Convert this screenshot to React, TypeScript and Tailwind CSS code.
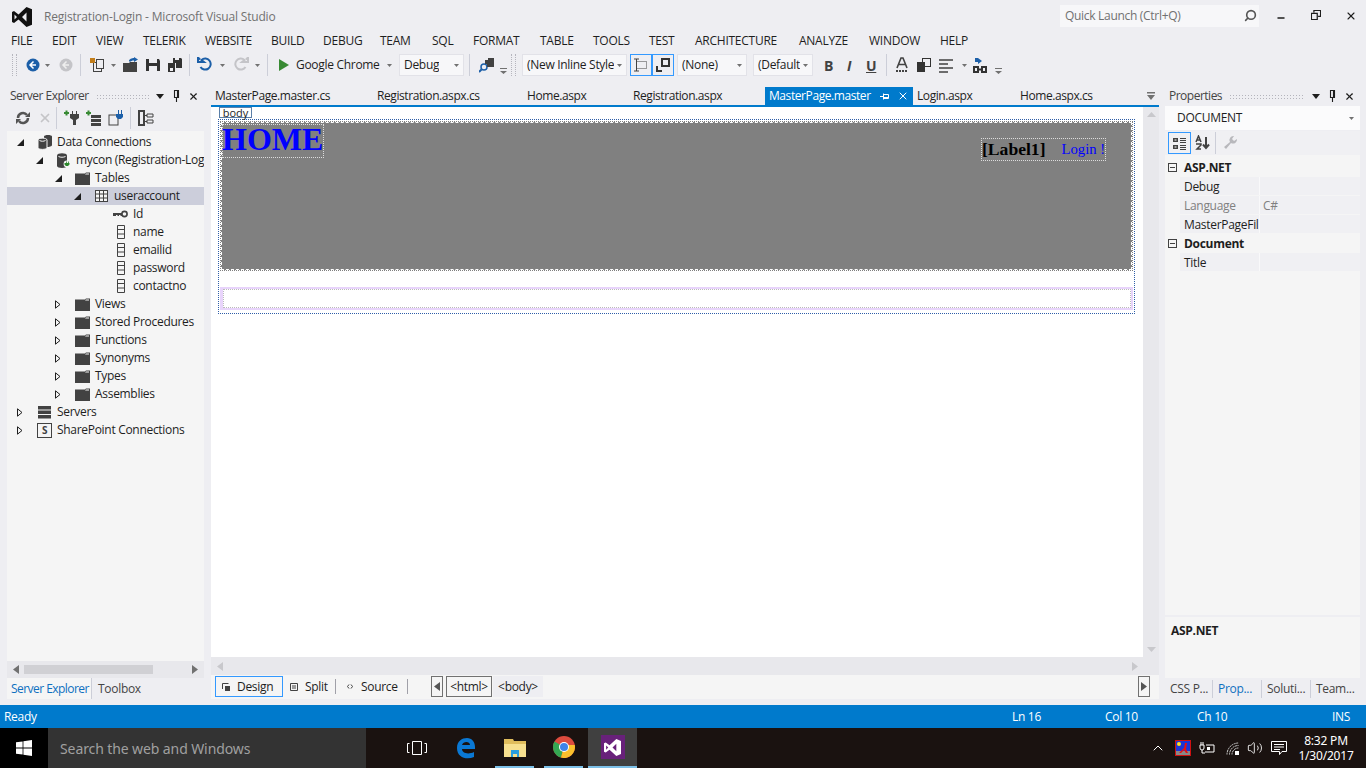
import { ReactNode } from 'react';
import { X, ChevronUp, Volume2, Search, Minus } from 'lucide-react';

const menus = [
  ['FILE', 'w-[41px]'], ['EDIT', 'w-[44px]'], ['VIEW', 'w-[47px]'], ['TELERIK', 'w-[62px]'], ['WEBSITE', 'w-[66px]'],
  ['BUILD', 'w-[52px]'], ['DEBUG', 'w-[57px]'], ['TEAM', 'w-[52px]'], ['SQL', 'w-[41px]'], ['FORMAT', 'w-[67px]'],
  ['TABLE', 'w-[53px]'], ['TOOLS', 'w-[56px]'], ['TEST', 'w-[46px]'], ['ARCHITECTURE', 'w-[104px]'], ['ANALYZE', 'w-[70px]'],
  ['WINDOW', 'w-[71px]'], ['HELP', 'w-[40px]'],
];

// small toolbar glyphs
const Caret = () => (
  <svg width="5" height="3" viewBox="0 0 5 3" className="block shrink-0"><path d="M0 0h5L2.500 3z" fill="#717171" /></svg>
);

const Grip = () => <div className="h-[22px] w-[5px] shrink-0 border-x border-dotted border-[#b5b5bd]" />;
const Sep = ({ cls }: { cls: string }) => <div className={`h-[22px] w-px shrink-0 bg-[#ccced8] ${cls}`} />;

const Ico = ({ w = 16, children }: { w?: number; children: ReactNode }) => (
  <svg width={w} height="16" viewBox={`0 0 ${w} 16`} className="block shrink-0">{children}</svg>
);

const Overflow = () => (
  <svg width="7" height="6" viewBox="0 0 7 6" className="mt-[12px] block shrink-0"><path d="M0 0h7v1H0zM0 3h7L3.500 6z" fill="#717171" /></svg>
);

const Combo = ({ label, cls }: { label: string; cls: string }) => (
  <div className={`flex h-[22px] shrink-0 items-center justify-between border border-[#e2e2e8] bg-[#f7f7f9] px-[4px] ${cls}`}>
    <span className="overflow-hidden whitespace-nowrap">{label}</span>
    <Caret />
  </div>
);

const VsLogo = ({ size, color }: { size: number; color: string }) => (
  <svg width={size} height={size} viewBox="0 0 20 20" className="shrink-0">
    <path d="M14.500 0 20 2.300v15.400L14.500 20 6.500 12.600 2 16l-2-1V5l2-1 4.500 3.400zM14.500 5.500 10 10l4.500 4.500zM2.500 7.500v5L5 10z" fill={color} fillRule="evenodd" />
  </svg>
);

const DockHeader = ({ title }: { title: string }) => (
  <div className="flex h-[18px] shrink-0 items-center pl-[3px] pr-[5px] tracking-[-0.5px] text-[#444]">
    <span className="whitespace-nowrap">{title}</span>
    <div className="mx-[7px] h-[5px] flex-1 bg-[radial-gradient(#b4b4bc_0.7px,transparent_0.8px)] bg-[length:3px_3px]" />
    <svg width="8" height="5" viewBox="0 0 8 5" className="mr-[9px]"><path d="M0 0h8L4 5z" fill="#1e1e1e" /></svg>
    <svg width="7" height="12" viewBox="0 0 7 12" className="mr-[8px]"><path d="M1 7.500h5M1.500 .5h4v7h-4zM4.500 1v6M3.500 8v4" fill="none" stroke="#1e1e1e" strokeWidth="1.100" /></svg>
    <X size={11} strokeWidth={2.500} color="#1e1e1e" />
  </div>
);

const Folder = () => (
  <Ico w={15}>
    <path d="M0 3.500h10l1-1h4V15H0z" fill="#424242" />
    <path d="M1 4.500h9l1-1h3v1H1z" fill="#f5f5f5" />
  </Ico>
);

const Column = () => (
  <Ico w={13}>
    <path d="M4.500 1.500h7v13h-7zM4.500 5.500h7M4.500 10h7" fill="none" stroke="#424242" />
  </Ico>
);

const Key = () => (
  <Ico w={15}>
    <path d="M0 7h9v3H7.500V9H6v1H4.500V9H3v1H0z" fill="#424242" />
    <circle cx="11.500" cy="8" r="2.600" fill="none" stroke="#424242" strokeWidth="1.600" />
  </Ico>
);

const Open = () => (
  <svg width="7" height="7" viewBox="0 0 7 7"><path d="M7 0v7H0z" fill="#1e1e1e" /></svg>
);
const Closed = () => (
  <svg width="6" height="9" viewBox="0 0 6 9"><path d="M.5.800 5 4.500.5 8.200z" fill="none" stroke="#1e1e1e" /></svg>
);

const Cylinders = () => (
  <Ico>
    <path d="M7 2.500C7 .5 15 .5 15 2.500V11c0 1.500-3 2-5 2V5H7z" fill="#424242" />
    <path d="M1 6c0-2.500 9-2.500 9 0v7.500c0 2.500-9 2.500-9 0z" fill="#424242" stroke="#f5f5f5" strokeWidth="1" />
    <path d="M2.500 6.500c2 1 4 1 6 0" fill="none" stroke="#f5f5f5" />
  </Ico>
);

const DbConn = () => (
  <Ico>
    <path d="M1 3.500c0-3 10-3 10 0V14c0 2.500-10 2.500-10 0z" fill="#424242" />
    <path d="M2.500 4.500c2 1 5 1 7 0" fill="none" stroke="#f5f5f5" />
    <circle cx="11" cy="12" r="3.400" fill="#f5f5f5" />
    <path d="M8.500 11h5v1.500l-1.500 1.500h-2L8.500 12.500zM10 9.500h.8V11H10zM12 9.500h.8V11H12z" fill="#2d8a2d" />
  </Ico>
);

const Row = ({ indent, arrow, icon, label, selected }: { indent: string; arrow?: ReactNode; icon: ReactNode; label: string; selected?: boolean }) => (
  <div className={`flex h-[18px] items-center whitespace-nowrap ${indent} ${selected ? 'bg-[#cccedb]' : ''}`}>
    <div className="flex w-[19px] shrink-0 items-center">{arrow}</div>
    <div className="flex w-[19px] shrink-0 justify-start pl-[1px]">{icon}</div>
    <span className="ml-[2px] text-[#1e1e1e]">{label}</span>
  </div>
);

const DocTab = ({ label, cls }: { label: string; cls: string }) => (
  <div className={`h-[18px] shrink-0 whitespace-nowrap pl-[4px] leading-[18px] tracking-[-0.42px] text-[#1e1e1e] ${cls}`}>{label}</div>
);

const PropRow = ({ name, value, muted }: { name: string; value?: string; muted?: boolean }) => (
  <div className={`ml-[12px] mb-px flex h-[18px] bg-[#f0f0f3] leading-[20px] ${muted ? 'text-[#808080]' : 'text-[#1e1e1e]'}`}>
    <div className="h-[18px] w-[80px] shrink-0 whitespace-nowrap border-r border-[#f9f9fa] pl-[4px]">{name}</div>
    <div className="h-[18px] pl-[3px]">{value}</div>
  </div>
);

const PropGroup = ({ name }: { name: string }) => (
  <div className="flex h-[19px] items-center">
    <div className="flex h-[9px] w-[9px] items-center justify-center border border-[#424242]">
      <div className="h-px w-[5px] bg-[#424242]" />
    </div>
    <span className="ml-[7px] font-bold text-[#1e1e1e]">{name}</span>
  </div>
);

export default function App() {
  return (
    <div className="flex h-[768px] w-[1366px] flex-col overflow-hidden bg-[#eeeef2] text-[12px] font-['Open_Sans','Noto_Sans',sans-serif] tracking-[-0.3px] text-[#1e1e1e]">
      {/* title bar */}
      <div className="flex h-[32px] shrink-0 items-center pl-[12px] pt-[2px]">
        <VsLogo size={20} color="#111" />
        <span className="ml-[12px] tracking-[-0.18px] text-[#717171]">Registration-Login - Microsoft Visual Studio</span>
        <div className="ml-auto mb-[3px] flex h-[22px] w-[199px] items-center justify-between bg-[#f7f7f9] pl-[5px] pr-[2px] text-[#717171]">
          <span>Quick Launch (Ctrl+Q)</span>
          <Search size={13} strokeWidth={3} color="#555" className="-scale-x-100" />
        </div>
        <div className="mb-[3px] flex w-[107px] items-center pl-[17px]">
          <Minus size={10} strokeWidth={4} color="#1e1e1e" className="mt-[4px]" />
          <svg width="10" height="10" viewBox="0 0 12 12" className="ml-[25px] mb-[1px]"><path d="M3.500 3V.5h8v7H8.500M.5 4h7v7.500h-7z" fill="none" stroke="#1e1e1e" strokeWidth="1.500" /></svg>
          <X size={12} strokeWidth={2.200} color="#1e1e1e" className="ml-[24px]" />
        </div>
      </div>

      {/* menu */}
      <div className="flex h-[18px] shrink-0 items-center pl-[11px] tracking-[-0.25px]">
        {menus.map(([m, w]) => (
          <div key={m} className={`shrink-0 whitespace-nowrap ${w}`}>{m}</div>
        ))}
      </div>

      {/* toolbar */}
      <div className="mt-[2px] flex h-[26px] shrink-0 items-center pl-[12px]">
        <Grip />
        <div className="ml-[8px]"><Ico><circle cx="8" cy="8" r="6.500" fill="#1c5fa8" /><path d="M8.500 4.500 5 8l3.500 3.500M5 8h6" stroke="#fff" strokeWidth="1.500" fill="none" /></Ico></div>
        <div className="ml-[4px] mr-[8px]"><Caret /></div>
        <Ico><circle cx="8" cy="8" r="6.500" fill="#c4c4c8" /><path d="M8.500 4.500 5 8l3.500 3.500M5 8h6" stroke="#eee" strokeWidth="1.500" fill="none" /></Ico>
        <Sep cls="ml-[6px] mr-[4px]" />
        <div className="ml-[4px]"><Ico><rect x="4.500" y="5.500" width="8" height="9" fill="none" stroke="#424242" /><rect x="7.500" y="2.500" width="7" height="9" fill="#eeeef2" stroke="#424242" /><rect x="1" y="1" width="5" height="5" fill="#c27d1a" /></Ico></div>
        <div className="ml-[6px] mr-[7px]"><Caret /></div>
        <Ico><path d="M0 6h6l1-1h7v10H0z" fill="#424242" /><path d="M6 4C6 2 9 1 11 1V0l4 2.500L11 5V3.500C9 3.500 8 4 7 5" fill="#1c5fa8" /></Ico>
        <div className="ml-[6px]"><Ico><path d="M1 2h3v4h8V2h2l1 2v10H1z" fill="#333" /><rect x="4" y="9" width="8" height="5" fill="#eeeef2" /></Ico></div>
        <div className="ml-[6px]"><Ico><path d="M6 1h2v2h4V1h2l1 1v9H9V6H6z" fill="#333" /><path d="M1 6h7v9H1z" fill="#333" /><rect x="3" y="11" width="3" height="3" fill="#eeeef2" /></Ico></div>
        <Sep cls="ml-[6px] mr-[4px]" />
        <div className="ml-[3px]"><Ico><path d="M3.500 10a5.500 5.500 0 1 0 1-7L7 5H1V.5l2 2" fill="none" stroke="#1c5fa8" strokeWidth="2" /></Ico></div>
        <div className="ml-[7px]"><Caret /></div>
        <div className="ml-[8px]"><Ico><path d="M12.500 10a5.500 5.500 0 1 1-1-7L9 5h6V.5l-2 2" fill="none" stroke="#c4c4c8" strokeWidth="2" /></Ico></div>
        <div className="ml-[6px]"><Caret /></div>
        <Sep cls="ml-[7px] mr-[4px]" />
        <div className="ml-[7px]"><svg width="10" height="12" viewBox="0 0 10 12" className="block"><path d="M0 0l10 6-10 6z" fill="#388a34" /></svg></div>
        <span className="ml-[7px] w-[84px] whitespace-nowrap">Google Chrome</span>
        <div className="ml-[7px]"><Caret /></div>
        <div className="ml-[7px]"><Combo label="Debug" cls="w-[65px]" /></div>
        <Sep cls="ml-[5px] mr-[4px]" />
        <div className="ml-[5px]"><Ico><circle cx="5" cy="10" r="3" fill="none" stroke="#1c5fa8" strokeWidth="1.500" /><path d="M2.500 12.500 0 15" stroke="#1c5fa8" strokeWidth="2" /><path d="M6 3h9v7H8V7H6z" fill="#424242" /><path d="M9 1h6v2H9z" fill="#424242" /></Ico></div>
        <div className="ml-[5px]"><Overflow /></div>
        <div className="ml-[4px]"><Grip /></div>
        <div className="ml-[6px]"><Combo label="(New Inline Style" cls="w-[105px]" /></div>
        <div className="ml-[3px] flex h-[22px] w-[22px] shrink-0 items-center justify-center border border-[#3399ff]">
          <svg width="16" height="14" viewBox="0 0 16 14"><rect x="3.500" y="3.500" width="10" height="7" fill="none" stroke="#424242" strokeDasharray="1 1" /><path d="M1 1h5M1 13h5M3.500 1v12" stroke="#424242" /></svg>
        </div>
        <div className="flex h-[22px] w-[22px] shrink-0 items-center justify-center border border-[#3399ff]">
          <svg width="16" height="16" viewBox="0 0 16 16"><path d="M2 15V9M2 14h5" fill="none" stroke="#333" strokeWidth="2" /><path d="M7 2h7v7H7z" fill="none" stroke="#333" strokeWidth="2" /></svg>
        </div>
        <div className="ml-[3px]"><Combo label="(None)" cls="w-[70px]" /></div>
        <div className="ml-[6px]"><Combo label="(Default" cls="w-[60px]" /></div>
        <span className="ml-[11px] w-[14px] text-[14px] font-bold text-[#424242]">B</span>
        <span className="ml-[9px] w-[8px] text-[14px] font-bold italic text-[#424242]">I</span>
        <span className="ml-[11px] w-[15px] text-[14px] font-bold text-[#424242] underline">U</span>
        <Sep cls="ml-[5px] mr-[4px]" />
        <div className="ml-[3px]"><Ico><path d="M3 11 7 1h2l4 10M5 7.500h6" fill="none" stroke="#424242" strokeWidth="1.600" /><path d="M2 14h12" stroke="#424242" strokeWidth="2" strokeDasharray="2 1" /></Ico></div>
        <div className="ml-[6px]"><Ico><rect x="6.500" y="1.500" width="8" height="8" fill="none" stroke="#333" /><rect x="1" y="5" width="8" height="10" fill="#333" /></Ico></div>
        <div className="ml-[6px]"><Ico><path d="M1 3h14M1 7h9M1 11h14M1 15h9" stroke="#424242" strokeWidth="1.600" /></Ico></div>
        <div className="ml-[8px]"><Caret /></div>
        <div className="ml-[5px]"><Ico><path d="M3 1h3l4 3-4 3V5H3z" fill="#1c5fa8" /><path d="M2 10h4v5H2zM10 10h4v5h-4z" fill="none" stroke="#333" strokeWidth="2" /><path d="M5 12.500h6" stroke="#333" strokeWidth="2" /></Ico></div>
        <div className="ml-[7px]"><Overflow /></div>
      </div>

      {/* docked panels */}
      <div className="mt-[9px] flex h-[618px] shrink-0">
        {/* server explorer */}
        <div className="ml-[7px] flex w-[197px] shrink-0 flex-col">
          <DockHeader title="Server Explorer" />
          <div className="flex h-[26px] shrink-0 items-center pl-[8px]">
            <Ico><path d="M13 8a5 5 0 0 1-9 3M3 8a5 5 0 0 1 9-3" fill="none" stroke="#555" strokeWidth="2.500" /><path d="M10 7h5V2zM6 9H1v5z" fill="#555" /></Ico>
            <div className="ml-[7px]"><X size={14} strokeWidth={3} color="#c4c4c8" /></div>
            <Sep cls="ml-[4px] mr-[4px]" />
            <div className="ml-[3px]"><Ico><path d="M0 3h5M2.500.5v5" stroke="#388a34" strokeWidth="2" /><path d="M6 4h9v4l-3 2v5h-3v-5L6 8zM8 1h1v3H8zM12 1h1v3h-1z" fill="#424242" /></Ico></div>
            <div className="ml-[6px]"><Ico><path d="M0 3h5M2.500.5v5" stroke="#388a34" strokeWidth="2" /><path d="M5 5h10v3H5zM5 9h10v3H5zM5 13h10v3H5z" fill="#424242" /></Ico></div>
            <div className="ml-[6px]"><Ico><rect x="1" y="5" width="9" height="10" fill="none" stroke="#424242" /><path d="M8 4h7v3l-2 2h-3L8 7zM10 0h1v4h-1zM13 0h1v4h-1z" fill="#1c5fa8" /></Ico></div>
            <Sep cls="ml-[6px] mr-[4px]" />
            <div className="ml-[3px]"><Ico><path d="M1 1h5v14H1z" fill="none" stroke="#424242" strokeWidth="2" /><path d="M9 4h6v3H9zM9 10h6v3H9zM6 5.500h3M6 11.500h3" fill="none" stroke="#424242" /></Ico></div>
          </div>
          <div className="flex-1 overflow-hidden bg-[#f5f5f5] pt-[2px]">
            <Row indent="pl-[10px]" arrow={<Open />} icon={<Cylinders />} label="Data Connections" />
            <Row indent="pl-[29px]" arrow={<Open />} icon={<DbConn />} label="mycon (Registration-Log" />
            <Row indent="pl-[48px]" arrow={<Open />} icon={<Folder />} label="Tables" />
            <Row indent="pl-[67px]" selected arrow={<Open />} icon={<Ico><rect x="1.500" y="2.500" width="12" height="11" fill="#f5f5f5" stroke="#424242" /><path d="M1.500 6h12M1.500 10h12M5.500 2.500v11M9.500 2.500v11" stroke="#424242" /></Ico>} label="useraccount" />
            {['Id', 'name', 'emailid', 'password', 'contactno'].map(c => (
              <Row key={c} indent="pl-[86px]" icon={c === 'Id' ? <Key /> : <Column />} label={c} />
            ))}
            {['Views', 'Stored Procedures', 'Functions', 'Synonyms', 'Types', 'Assemblies'].map(f => (
              <Row key={f} indent="pl-[48px]" arrow={<Closed />} icon={<Folder />} label={f} />
            ))}
            <Row indent="pl-[10px]" arrow={<Closed />} icon={<Ico><path d="M1 2h13v3.500H1zM1 6.500h13V10H1zM1 11h13v3.500H1z" fill="#424242" /></Ico>} label="Servers" />
            <Row indent="pl-[10px]" arrow={<Closed />} icon={<div className="flex h-[15px] w-[15px] items-center justify-center border border-[#424242] text-[10px] font-bold leading-none text-[#424242]">S</div>} label="SharePoint Connections" />
          </div>
          <div className="flex h-[17px] shrink-0 items-center bg-[#e8e8ec] px-[6px]">
            <svg width="6" height="9" viewBox="0 0 6 9"><path d="M6 0v9L0 4.500z" fill="#717171" /></svg>
            <div className="ml-[5px] h-[9px] w-[129px] bg-[#d0d0d4]" />
            <svg width="6" height="9" viewBox="0 0 6 9" className="ml-auto"><path d="M0 0v9l6-4.500z" fill="#717171" /></svg>
          </div>
          <div className="flex h-[21px] shrink-0 items-center text-[#444]">
            <div className="flex h-[21px] w-[85px] items-center whitespace-nowrap border-r border-[#ccced8] bg-[#f5f5f5] pl-[4px] tracking-[-0.55px] text-[#0e70c0]">Server Explorer</div>
            <div className="pl-[6px]">Toolbox</div>
          </div>
          <div className="h-[6px] shrink-0" />
        </div>

        {/* editor */}
        <div className="ml-[7px] flex w-[948px] shrink-0 flex-col">
          <div className="flex h-[18px] shrink-0 items-center">
            <DocTab label="MasterPage.master.cs" cls="w-[162px]" />
            <DocTab label="Registration.aspx.cs" cls="w-[150px]" />
            <DocTab label="Home.aspx" cls="w-[106px]" />
            <DocTab label="Registration.aspx" cls="w-[136px]" />
            <div className="flex h-[18px] w-[148px] shrink-0 items-center bg-[#007acc] pl-[4px] tracking-[-0.42px] text-white">
              <span className="w-[107px] whitespace-nowrap">MasterPage.master</span>
              <svg width="9" height="7" viewBox="0 0 9 7" className="ml-[4px]"><path d="M0 3.500h3M3.500 .5v6M3.500 1.500h5v4h-5M3.500 4.500h5" fill="none" stroke="#fff" /></svg>
              <X size={12} strokeWidth={2} color="#fff" className="ml-[8px]" />
            </div>
            <DocTab label="Login.aspx" cls="w-[103px]" />
            <DocTab label="Home.aspx.cs" cls="w-[130px]" />
            <svg width="8" height="8" viewBox="0 0 8 8" className="ml-[1px]"><path d="M0 0h8v1.500H0zM0 3h8L4 8z" fill="#717171" /></svg>
          </div>
          <div className="h-[2px] shrink-0 bg-[#007acc]" />
          <div className="flex min-h-0 flex-1">
            <div className="flex-1 bg-white pl-[7px] pr-[7px]">
              <div className="ml-[1px] h-[11px] w-[33px] border border-[#5b7fa8] text-center text-[11px] leading-[9px] tracking-normal">body</div>
              <div className="mt-[1px] mr-[1px] h-[195px] border border-dotted border-[#2f5ea8] p-[1px]">
                <div className="border border-dotted border-[#808080]">
                  <div className="h-[148px] border border-dashed border-white bg-[#808080]">
                    <div className="flex items-start justify-between">
                      <div className="mt-px h-[34px] w-[102px] border border-dotted border-[#ddd] font-['Liberation_Serif',serif] text-[32px] font-bold leading-[29px] tracking-normal text-[#0000ff]">
                        <span className="-ml-px">HOME</span>
                      </div>
                      <div className="mr-[25px] mt-[15px] flex h-[23px] w-[125px] items-center whitespace-nowrap border border-dotted border-[#ddd] font-['Liberation_Serif',serif] tracking-normal">
                        <span className="text-[17.6px] font-bold leading-none text-black">[Label1]</span>
                        <span className="ml-[16px] text-[14.67px] leading-none text-[#0000ff]">Login !</span>
                      </div>
                    </div>
                  </div>
                </div>
                <div className="mt-[16px] h-[23px] border-2 border-l-[3px] border-[#e8d4fb]">
                  <div className="h-[19px] border border-dotted border-[#bbb]" />
                </div>
              </div>
            </div>
            <div className="flex w-[16px] shrink-0 flex-col items-center justify-between bg-[#e8e8ec] py-[5px]">
              <svg width="9" height="5" viewBox="0 0 9 5"><path d="M0 5h9L4.500 0z" fill="#c8c8cc" /></svg>
              <svg width="9" height="5" viewBox="0 0 9 5"><path d="M0 0h9L4.500 5z" fill="#c8c8cc" /></svg>
            </div>
          </div>
          <div className="flex h-[18px] shrink-0 items-center justify-between bg-[#e8e8ec] pl-[6px] pr-[21px]">
            <svg width="6" height="9" viewBox="0 0 6 9"><path d="M6 0v9L0 4.500z" fill="#c8c8cc" /></svg>
            <svg width="6" height="9" viewBox="0 0 6 9"><path d="M0 0v9l6-4.500z" fill="#c8c8cc" /></svg>
          </div>
          <div className="flex h-[24px] shrink-0 items-center bg-[#f5f5f5] pb-[1px] pl-[4px]">
            <div className="flex h-[21px] w-[68px] shrink-0 items-center border border-[#3399ff] pl-[6px]">
              <svg width="8" height="8" viewBox="0 0 8 8"><path d="M.5 6V.5h6" fill="none" stroke="#424242" /><rect x="3" y="3" width="5" height="5" fill="#424242" /></svg>
              <span className="ml-[7px]">Design</span>
            </div>
            <svg width="8" height="8" viewBox="0 0 8 8" className="ml-[7px] shrink-0"><path d="M.5.5h7v7h-7zM2 3h4M2 5h4" fill="none" stroke="#424242" /></svg>
            <span className="ml-[7px] w-[30px] shrink-0">Split</span>
            <div className="h-[15px] w-px shrink-0 bg-[#a0a0a8]" />
            <svg width="6" height="5" viewBox="0 0 6 5" className="ml-[11px] shrink-0"><path d="M2 .5 .5 2.500 2 4.500M4 .5l1.500 2L4 4.500" fill="none" stroke="#424242" /></svg>
            <span className="ml-[8px] w-[36px] shrink-0">Source</span>
            <div className="ml-[10px] h-[15px] w-px shrink-0 bg-[#a0a0a8]" />
            <div className="ml-[23px] flex h-[21px] w-[12px] shrink-0 items-center justify-center border border-[#717171]">
              <svg width="6" height="9" viewBox="0 0 6 9"><path d="M6 0v9L0 4.500z" fill="#555" /></svg>
            </div>
            <div className="ml-[3px] flex h-[21px] w-[46px] shrink-0 items-center justify-center border border-[#717171]">&lt;html&gt;</div>
            <div className="ml-px flex h-[21px] w-[50px] shrink-0 items-center justify-center bg-[#eeeef2]">&lt;body&gt;</div>
            <div className="ml-auto mr-[9px] flex h-[21px] w-[12px] items-center justify-center border border-[#717171]">
              <svg width="6" height="9" viewBox="0 0 6 9"><path d="M0 0v9l6-4.500z" fill="#555" /></svg>
            </div>
          </div>
          <div className="h-[6px] shrink-0" />
        </div>

        {/* properties */}
        <div className="ml-[6px] flex w-[195px] shrink-0 flex-col">
          <div className="pl-[1px]"><DockHeader title="Properties" /></div>
          <div className="mt-px flex h-[24px] shrink-0 items-center justify-between bg-[#fbfbfc] pl-[12px] pr-[6px]">
            <span>DOCUMENT</span>
            <Caret />
          </div>
          <div className="mt-[1px] flex h-[24px] shrink-0 items-center bg-[#f0f0f3] pl-[3px]">
            <div className="flex h-[22px] w-[23px] items-center justify-center border border-[#3399ff]">
              <svg width="15" height="15" viewBox="0 0 15 15"><path d="M1 2h5v4H1zM1 9h5v4H1z" fill="#424242" /><path d="M2.500 4h2M2.500 11h2" stroke="#fff" /><path d="M8 2.500h6M8 4.500h6M8 6.500h6M8 9.500h6M8 11.500h6M8 13.500h6" fill="none" stroke="#424242" /></svg>
            </div>
            <div className="ml-[4px]"><Ico><path d="M1 7 3.500 1 6 7M2 5h3M1 9h5v1l-4 4h4" fill="none" stroke="#424242" strokeWidth="1.500" /><path d="M11 2v11M8 9.500l3 3.500 3-3.500" fill="none" stroke="#424242" strokeWidth="2" /></Ico></div>
            <Sep cls="ml-[4px] mr-[4px]" />
            <div className="ml-[3px]"><Ico><path d="M14 4a4 4 0 0 1-6 4l-5 6-2-2 6-5a4 4 0 0 1 4-6L9 4l2 2z" fill="#b8b8bc" /></Ico></div>
          </div>
          <div className="flex-1 bg-[#f5f5f5] pl-[3px] pt-[3px]">
            <PropGroup name="ASP.NET" />
            <PropRow name="Debug" />
            <PropRow name="Language" value="C#" muted />
            <PropRow name="MasterPageFil" />
            <PropGroup name="Document" />
            <PropRow name="Title" />
          </div>
          <div className="mt-[2px] h-[61px] shrink-0 bg-[#f5f5f5] pl-[6px] pt-[5px] font-bold">ASP.NET</div>
          <div className="flex h-[21px] shrink-0 items-center text-[#444]">
            <div className="w-[48px] border-r border-[#ccced8] pl-[5px]">CSS P...</div>
            <div className="w-[49px] border-r border-[#ccced8] pl-[5px] text-[#0e70c0]">Prop...</div>
            <div className="w-[49px] border-r border-[#ccced8] pl-[5px]">Soluti...</div>
            <div className="pl-[5px]">Team...</div>
          </div>
          <div className="h-[6px] shrink-0" />
        </div>
      </div>

      {/* status bar */}
      <div className="flex h-[23px] shrink-0 items-center bg-[#007acc] pl-[4px] text-white">
        <span className="w-[1008px]">Ready</span>
        <span className="w-[93px]">Ln 16</span>
        <span className="w-[92px]">Col 10</span>
        <span className="w-[135px]">Ch 10</span>
        <span>INS</span>
      </div>

      {/* taskbar */}
      <div className="flex h-[40px] shrink-0 items-center bg-[#1a1210] font-['Noto_Sans',sans-serif] tracking-normal">
        <div className="flex h-full w-[48px] items-center justify-center bg-black">
          <svg width="16" height="16" viewBox="0 0 16 16"><path d="M0 2.300 6.600 1.400v6.200H0zM7.400 1.300 16 0v7.600H7.400zM0 8.400h6.600v6.200L0 13.700zM7.400 8.400H16V16l-8.600-1.300z" fill="#fff" /></svg>
        </div>
        <div className="flex h-full w-[318px] items-center bg-[#333] pl-[12px] text-[14px] tracking-[-0.1px] text-[#a0a0a0]">Search the web and Windows</div>
        <div className="ml-[26px] flex h-full items-center">
          <div className="flex h-[40px] w-[49px] items-center justify-center">
            <svg width="20" height="14" viewBox="0 0 20 14"><path d="M5.500 .5h9v13h-9z" fill="none" stroke="#fff" /><path d="M2.500 2.500H.5v9h2M17.500 2.500h2v9h-2" fill="none" stroke="#fff" /></svg>
          </div>
          <div className="flex h-[40px] w-[49px] items-center justify-center">
            <svg width="20" height="22" viewBox="0 0 20 22"><path d="M1 11C1 4 6 1 11 1c5 0 8 4 8 9v2H6c0 4 6 6 12 3v5c-7 3-17 1-17-9zM6 8h8c0-4-7-4-8 0z" fill="#0a78d4" fillRule="evenodd" /></svg>
          </div>
          <div className="flex h-[40px] w-[49px] px-[5px]">
            <div className="flex h-[40px] w-[39px] items-center justify-center border-b-2 border-[#7cc0e8]">
              <svg width="22" height="20" viewBox="0 0 22 20"><path d="M0 2h9l1 2h12v16H0z" fill="#e0bd5c" /><path d="M0 7h22v13H0z" fill="#f7e08f" /><path d="M7 13h8v7h-2v-3H9v3H7z" fill="#2a9fe0" /></svg>
            </div>
          </div>
          <div className="flex h-[40px] w-[49px] px-[5px]">
            <div className="flex h-[40px] w-[39px] items-center justify-center border-b-2 border-[#7cc0e8]">
              <svg width="22" height="22" viewBox="0 0 22 22">
                <circle cx="11" cy="11" r="11" fill="#dd4b3e" />
                <path d="M11 11 1.500 5.500A11 11 0 0 0 8 21.600z" fill="#34a853" />
                <path d="M11 11 8 21.600A11 11 0 0 0 21.800 9H11z" fill="#fbc02d" />
                <circle cx="11" cy="11" r="5" fill="#fff" />
                <circle cx="11" cy="11" r="4" fill="#3f83e8" />
              </svg>
            </div>
          </div>
          <div className="flex h-[40px] w-[49px] items-center justify-center border-b-2 border-[#7cc0e8] bg-[#404040]">
            <div className="flex h-[24px] w-[24px] items-center justify-center bg-[#68217a]"><VsLogo size={17} color="#fff" /></div>
          </div>
        </div>
        <div className="ml-auto flex items-center text-white">
          <ChevronUp size={16} strokeWidth={1.500} color="#fff" />
          <div className="relative ml-[9px] h-[16px] w-[16px] border border-[#d01010] bg-[#1c34d8]">
            <svg width="14" height="14" viewBox="0 0 14 14" className="block"><path d="M0 10h14v4H0z" fill="#888" /><circle cx="3" cy="3" r="2" fill="#ffe020" /><path d="M3 12 8 7l1-5 2 0-1 6 2 4-2 0-2-3-3 3z" fill="#e81010" /></svg>
          </div>
          <svg width="16" height="12" viewBox="0 0 16 12" className="ml-[8px]"><path d="M5 3v3a2 2 0 0 1-4 0V3zM2 0v3M4 0v3M3 8v3h3" fill="none" stroke="#fff" /><path d="M7 3h8v7H6" fill="none" stroke="#fff" /><path d="M8 5h3v3H8z" fill="#fff" /></svg>
          <svg width="13" height="13" viewBox="0 0 13 13" className="ml-[11px]"><path d="M1 12.500A11.500 11.500 0 0 1 12.500 1M3.500 12.500a9 9 0 0 1 9-9M6 12.500a6.500 6.500 0 0 1 6.500-6.500" fill="none" stroke="#ccc" strokeDasharray="2 .6" /><path d="M9 9h4v4H9z" fill="#fff" /></svg>
          <Volume2 size={16} strokeWidth={1.300} color="#fff" className="ml-[8px]" />
          <svg width="16" height="16" viewBox="0 0 16 16" className="ml-[8px]"><path d="M.5 1.500h15v10H11l-2.500 3v-3h-8zM3 4.500h10M3 7h10M3 9.500h6" fill="none" stroke="#fff" /></svg>
          <div className="ml-[11px] mr-[12px] w-[56px] text-center text-[12px] leading-[15px] tracking-[-0.2px]">
            <div className="whitespace-nowrap">8:32 PM</div>
            <div className="whitespace-nowrap">1/30/2017</div>
          </div>
        </div>
      </div>
    </div>
  );
}
